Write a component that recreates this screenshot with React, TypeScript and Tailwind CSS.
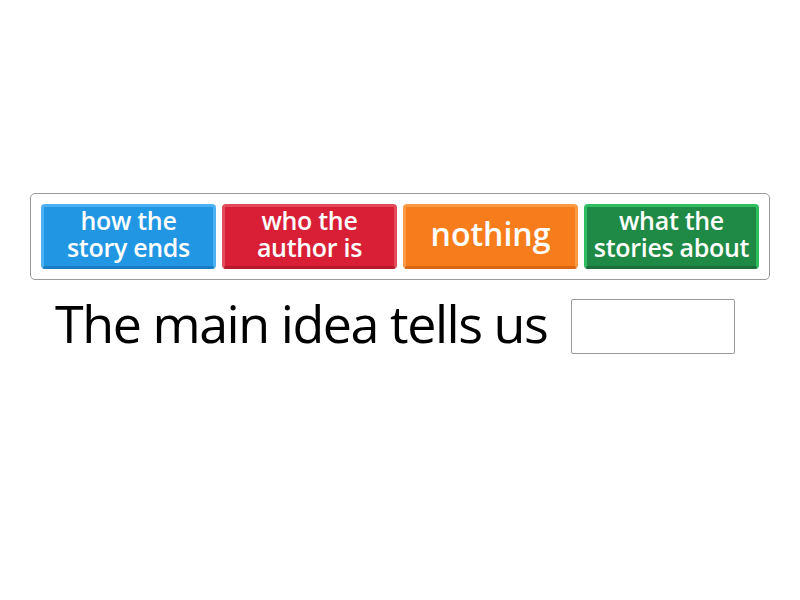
const tiles = [
  {
    label: ['how the', 'story ends'],
    cls: 'bg-[#2196e3] border-[#4db0f2] border-b-[#1a7cc4]',
  },
  {
    label: ['who the', 'author is'],
    cls: 'bg-[#d81f36] border-[#e34b5d] border-b-[#b5192c]',
  },
  {
    label: ['nothing'],
    cls: 'bg-[#f77c1c] border-[#fb9a45] border-b-[#d9650f]',
  },
  {
    label: ['what the', 'stories about'],
    cls: 'bg-[#1f8a45] border-[#2ebd5f] border-b-[#1a6f38]',
  },
]

export default function App() {
  return (
    <div
      className="w-[800px] h-[600px] bg-white pt-[193px] px-[30px]"
      style={{ fontFamily: '"Open Sans", "Noto Sans", sans-serif' }}
    >
      <div className="w-[740px] h-[87px] border border-[#9a9a9a] rounded-[5px] flex gap-[6px] px-[10px] py-[10px]">
        {tiles.map(t => (
          <div
            key={t.label.join(' ')}
            className={`w-[175px] h-[65px] rounded-[4px] border-[3px] flex flex-col items-center justify-center text-white font-semibold pb-[5px] ${t.cls}`}
          >
            {t.label.length === 1 ? (
              <span className="text-[32px] leading-[36px]">{t.label[0]}</span>
            ) : (
              t.label.map(l => (
                <span key={l} className="text-[25px] leading-[27px] whitespace-nowrap tracking-[-0.3px]">
                  {l}
                </span>
              ))
            )}
          </div>
        ))}
      </div>

      <div className="flex items-center mt-[19px] pl-[25px]">
        <span className="text-[52px] leading-[56px] text-black tracking-[-1.45px] -mt-[8px]">The main idea tells us</span>
        <div className="ml-[24px] w-[164px] h-[55px] border border-[#9a9a9a] rounded-[2px]" />
      </div>
    </div>
  )
}
